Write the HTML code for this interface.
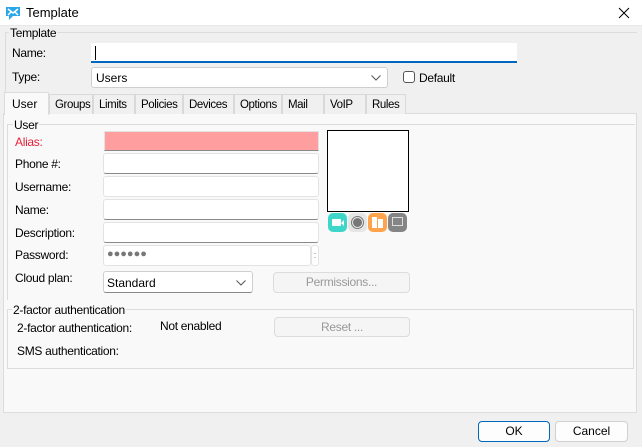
<!DOCTYPE html>
<html><head><meta charset="utf-8"><style>
*{box-sizing:border-box;margin:0;padding:0}
body{width:642px;height:447px;overflow:hidden;background:#f0f0f0;font-family:"Liberation Sans",sans-serif;font-size:12px;color:#000;position:relative}
.a{position:absolute}
.inp{position:absolute;background:#fff;border:1px solid #e3e3e3;border-bottom:1px solid #8a8a8a;border-radius:3px}
.lbl{position:absolute;font-size:12px;letter-spacing:-0.3px}
.tab{position:absolute;top:94px;height:20px;border:1px solid #d9d9d9;border-bottom:none;background:#f0f0f0;padding:4px 0 0 5px;letter-spacing:-0.4px;font-size:11.5px}
.btn{position:absolute;border:1px solid #dcdcdc;border-radius:4px;background:#f5f5f5;color:#999;text-align:center;line-height:19px;letter-spacing:-0.3px}
.grp{position:absolute;border:1px solid #dcdcdc}
.gt{position:absolute;background:inherit;padding:0 1px;letter-spacing:-0.3px}
</style></head><body>
<div class="a" style="left:0;top:0;width:642px;height:26px;background:#fff;border-bottom:1px solid #e8e8e8"></div>
<svg class="a" style="left:5px;top:5px" width="16" height="16" viewBox="0 0 16 16"><path d="M1 2h14v9H8l-4 4v-4H1z" fill="#2aa7e8"/><path d="M3 4l5 4 5-4M3 10l3-3M13 10l-3-3" stroke="#fff" stroke-width="1.5" fill="none"/></svg>
<div class="a" style="left:26px;top:5px;font-size:13px">Template</div>
<svg class="a" style="left:618px;top:7px" width="12" height="12"><path d="M1 1l10 10M11 1L1 11" stroke="#000" stroke-width="1"/></svg>

<div class="grp" style="left:5px;top:32px;width:632px;height:60px;border-right:none;border-bottom:none"></div>
<div class="gt" style="left:9px;top:26px;background:#f0f0f0">Template</div>
<div class="lbl" style="left:12px;top:46px">Name:</div>
<div class="a" style="left:91px;top:43px;width:426px;height:20px;background:#fff;border-bottom:2px solid #0067c0"></div>
<div class="a" style="left:95px;top:46px;width:1px;height:14px;background:#000"></div>
<div class="lbl" style="left:12px;top:70px">Type:</div>
<div class="inp" style="left:91px;top:67px;width:297px;height:21px;border-color:#cfcfcf"><span style="position:absolute;left:4px;top:3px">Users</span><svg style="position:absolute;right:6px;top:7px" width="10" height="6"><path d="M0.5 0.5l4.5 4.5 4.5-4.5" stroke="#555" fill="none"/></svg></div>
<div class="a" style="left:403px;top:71px;width:12px;height:12px;border:1px solid #555;border-radius:3px;background:#fff"></div>
<div class="lbl" style="left:419px;top:71px">Default</div>

<div class="a" style="left:3px;top:113px;width:634px;height:300px;background:#f9f9f9;border:1px solid #dcdcdc"></div>
<div class="tab" style="left:49px;width:44px">Groups</div>
<div class="tab" style="left:93px;width:42px">Limits</div>
<div class="tab" style="left:135px;width:48px">Policies</div>
<div class="tab" style="left:183px;width:51px">Devices</div>
<div class="tab" style="left:234px;width:48px">Options</div>
<div class="tab" style="left:282px;width:42px">Mail</div>
<div class="tab" style="left:324px;width:42px">VoIP</div>
<div class="tab" style="left:366px;width:40px">Rules</div>
<div class="a" style="left:4px;top:92px;width:45px;height:23px;background:#f9f9f9;border:1px solid #dcdcdc;border-bottom:none;padding:4px 0 0 7px">User</div>

<div class="grp" style="left:7px;top:124px;width:628px;height:176px;border-right:none;border-bottom:none"></div>
<div class="gt" style="left:13px;top:118px;background:#f9f9f9">User</div>
<div class="lbl" style="left:15px;top:135px;color:#e8203c">Alias:</div>
<div class="a" style="left:104px;top:131px;width:215px;height:20px;background:#ff9e9e;border:1px solid #e3e3e3;border-bottom:1px solid #8a8a8a"></div>
<div class="lbl" style="left:15px;top:157px">Phone #:</div>
<div class="inp" style="left:103px;top:153px;width:216px;height:21px"></div>
<div class="lbl" style="left:15px;top:180px">Username:</div>
<div class="inp" style="left:103px;top:176px;width:216px;height:21px;border-bottom-color:#e3e3e3"></div>
<div class="lbl" style="left:15px;top:203px">Name:</div>
<div class="inp" style="left:103px;top:199px;width:216px;height:21px"></div>
<div class="lbl" style="left:15px;top:226px">Description:</div>
<div class="inp" style="left:103px;top:222px;width:216px;height:21px"></div>
<div class="lbl" style="left:15px;top:248px">Password:</div>
<div class="inp" style="left:103px;top:245px;width:208px;height:21px;border-bottom-color:#e3e3e3"><span style="position:absolute;left:3px;top:2px;color:#777;font-size:11px;letter-spacing:0">●●●●●●</span></div>
<div class="inp" style="left:311px;top:245px;width:8px;height:21px;border-bottom-color:#e3e3e3;font-size:9px;color:#777;text-align:center;line-height:19px">:</div>
<div class="lbl" style="left:15px;top:271px">Cloud plan:</div>
<div class="inp" style="left:103px;top:271px;width:150px;height:22px;border-color:#cfcfcf;border-bottom-color:#8a8a8a"><span style="position:absolute;left:3px;top:4px">Standard</span><svg style="position:absolute;right:6px;top:8px" width="10" height="6"><path d="M0.5 0.5l4.5 4.5 4.5-4.5" stroke="#555" fill="none"/></svg></div>
<div class="btn" style="left:273px;top:272px;width:137px;height:21px">Permissions...</div>

<div class="a" style="left:327px;top:130px;width:82px;height:82px;border:1px solid #000;background:#fff"></div>
<div class="a" style="left:328px;top:213px;width:19px;height:19px;border-radius:5px;background:#3dd6c8"><div style="position:absolute;left:4px;top:6px;width:9px;height:7px;background:#fff;border-radius:1px"></div><div style="position:absolute;left:13px;top:7px;border:3px solid transparent;border-right:3px solid #fff;border-left:none"></div></div>
<div class="a" style="left:348px;top:213px;width:19px;height:19px;border-radius:5px;background:#e6e6e6"><div style="position:absolute;left:3px;top:3px;width:13px;height:13px;border-radius:50%;border:1px solid #777"></div><div style="position:absolute;left:5px;top:5px;width:9px;height:9px;border-radius:50%;background:#777"></div></div>
<div class="a" style="left:368px;top:213px;width:19px;height:19px;border-radius:5px;background:#ffa34d"><div style="position:absolute;left:4px;top:4px;width:5px;height:11px;background:#fff"></div><div style="position:absolute;left:10px;top:6px;width:5px;height:9px;background:#fff"></div></div>
<div class="a" style="left:388px;top:213px;width:19px;height:19px;border-radius:5px;background:#858585"><div style="position:absolute;left:4px;top:4px;width:11px;height:9px;border:1px solid #ddd"></div></div>

<div class="grp" style="left:7px;top:309px;width:627px;height:60px"></div>
<div class="gt" style="left:12px;top:303px;background:#f9f9f9">2-factor authentication</div>
<div class="lbl" style="left:17px;top:321px">2-factor authentication:</div>
<div class="lbl" style="left:160px;top:319px">Not enabled</div>
<div class="btn" style="left:274px;top:317px;width:136px;height:20px">Reset ...</div>
<div class="lbl" style="left:17px;top:344px">SMS authentication:</div>

<div class="a" style="left:478px;top:421px;width:72px;height:21px;background:#fdfdfd;border:1px solid #0067c0;border-radius:4px;text-align:center;line-height:19px">OK</div>
<div class="a" style="left:555px;top:421px;width:73px;height:21px;background:#fdfdfd;border:1px solid #d0d0d0;border-radius:4px;text-align:center;line-height:19px">Cancel</div>
</body></html>
